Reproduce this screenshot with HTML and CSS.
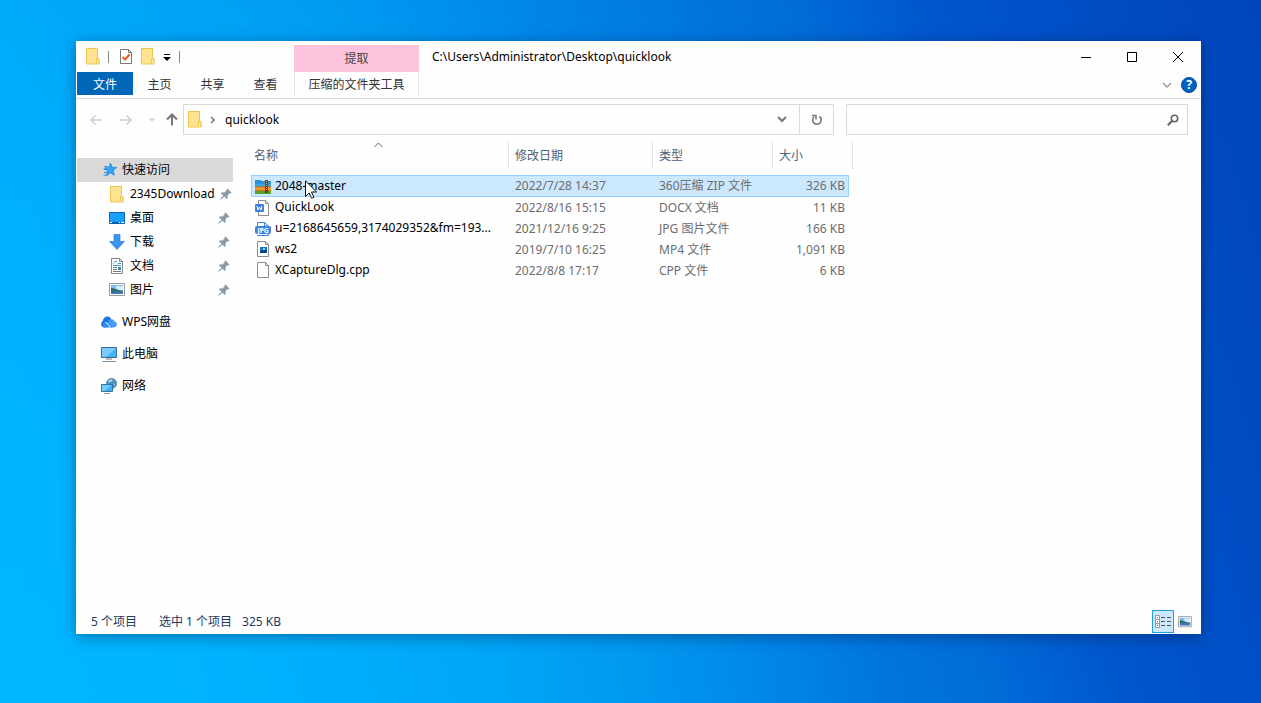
FILE: index.html
```
<!DOCTYPE html>
<html lang="zh-CN">
<head>
  <meta charset="UTF-8">
  <meta name="viewport" content="width=device-width, initial-scale=1.0">
  <title>quicklook</title>
  <link rel="stylesheet" href="styles.css">
</head>
<body>

  <!-- shared icons -->
  <svg class="sprite" aria-hidden="true">
    <symbol id="folder" viewBox="0 0 14 17">
      <path d="M.5.5h11v10.500h1.500v5H.5z" fill="#ffe391" stroke="#ecc54f"/>
      <path d="M10.500 15.500v-5h2.500v5.500" fill="#ffe9a8" stroke="#ecc54f"/>
    </symbol>
    <symbol id="pin" viewBox="0 0 12 12">
      <path d="M7.500.5l4 4-1 1-1-.2-2 2.200.2 2.500-1 1-2.400-2.500L1 11.800l-.8-.8 3.200-3.300L1 5.300l1-1 2.400.2 2.100-2-.1-1z" fill="#8a9aa6"/>
    </symbol>
    <symbol id="picture" viewBox="0 0 16 14">
      <path d="M.5.5h15v12H.5z" fill="#fff" stroke="#999"/>
      <path d="M2 2h12v9H2z" fill="#7fb9ee"/>
      <path d="M6 3h8v4H9z" fill="#d8ecfc"/>
      <path d="M2 5c3 0 5 2 12 3v1H2z" fill="#356b62"/>
      <path d="M2 8.500h12V11H2z" fill="#3f78b8"/>
    </symbol>
    <symbol id="page" viewBox="0 0 14 17">
      <path d="M1.500.5h8l3 3v12h-11z" fill="#fff" stroke="#8c8c8c"/>
      <path d="M9.500.5v3h3" fill="none" stroke="#8c8c8c"/>
    </symbol>
  </svg>

  <main class="window">
    <header class="titlebar">
      <div class="quick-access">
        <svg class="folder" width="14" height="17"><use href="#folder"/></svg>
        <span class="divider"></span>
        <button aria-label="属性"><svg width="14" height="17" viewBox="0 0 14 17"><path d="M1.500 1.500h8l3 3v11h-11z" fill="#fff" stroke="#777"/><path d="M9.500 1.500v3h3" fill="none" stroke="#777"/><path d="M3.500 9l2.500 2.500 4.500-5" fill="none" stroke="#e06020" stroke-width="2"/></svg></button>
        <button aria-label="新建文件夹"><svg width="14" height="17"><use href="#folder"/></svg></button>
        <button aria-label="自定义快速访问工具栏"><svg width="8" height="8" viewBox="0 0 8 8"><path d="M1 1.500h6" stroke="#000"/><path d="M0 4h8L4 8z"/></svg></button>
        <span class="divider"></span>
      </div>
      <div class="context-title">提取</div>
      <h1>C:\Users\Administrator\Desktop\quicklook</h1>
      <div class="controls">
        <button aria-label="最小化"><svg width="12" height="12" viewBox="0 0 12 12"><path d="M1 6.500h10" stroke="#000"/></svg></button>
        <button aria-label="最大化"><svg width="12" height="12" viewBox="0 0 12 12"><path d="M1.500 1.500h9v9h-9z" fill="none" stroke="#000"/></svg></button>
        <button aria-label="关闭"><svg width="12" height="12" viewBox="0 0 12 12"><path d="M1 1l10 10M11 1L1 11" stroke="#000"/></svg></button>
      </div>
    </header>

    <nav class="tabs">
      <button class="tab file">文件</button>
      <button class="tab">主页</button>
      <button class="tab">共享</button>
      <button class="tab">查看</button>
      <button class="tab context">压缩的文件夹工具</button>
      <div class="tabs-right">
        <button aria-label="展开功能区"><svg width="10" height="6" viewBox="0 0 10 6"><path d="M1 1l4 4 4-4" fill="none" stroke="#999" stroke-width="1.300"/></svg></button>
        <button class="help" aria-label="帮助">?</button>
      </div>
    </nav>

    <div class="toolbar">
      <div class="history">
        <button aria-label="后退"><svg width="14" height="12" viewBox="0 0 14 12"><path d="M13 6H2M6.500 1.500L2 6l4.500 4.500" fill="none" stroke="#ccc" stroke-width="1.500"/></svg></button>
        <button aria-label="前进"><svg width="14" height="12" viewBox="0 0 14 12"><path d="M1 6h11M7.500 1.500L12 6l-4.500 4.500" fill="none" stroke="#ccc" stroke-width="1.500"/></svg></button>
        <button class="recent" aria-label="最近浏览的位置"><svg width="6" height="5" viewBox="0 0 6 5"><path d="M.5 1L3 3.500 5.500 1" fill="none" stroke="#ccc" stroke-width="1.300"/></svg></button>
        <button class="up" aria-label="上移"><svg width="12" height="13" viewBox="0 0 12 13"><path d="M6 12.500V2M1 6.500l5-5 5 5" fill="none" stroke="#777" stroke-width="2"/></svg></button>
      </div>
      <div class="address">
        <svg width="14" height="17"><use href="#folder"/></svg>
        <svg class="crumb" width="6" height="8" viewBox="0 0 6 8"><path d="M1 1l3 3-3 3" fill="none" stroke="#777" stroke-width="1.600"/></svg>
        <a href="#">quicklook</a>
        <button class="drop" aria-label="以前的位置"><svg width="10" height="7" viewBox="0 0 10 7"><path d="M1 1l4 4 4-4" fill="none" stroke="#777" stroke-width="2"/></svg></button>
        <button class="refresh" aria-label="刷新"><svg width="12" height="12" viewBox="0 0 12 12"><path d="M8.500 2.500A4.300 4.300 0 1 1 3 2.800" fill="none" stroke="#777" stroke-width="1.600"/><path d="M1 1.500h4v4" fill="none" stroke="#777" stroke-width="1.500"/></svg></button>
      </div>
      <div class="search">
        <input type="search" aria-label="搜索">
        <svg width="12" height="12" viewBox="0 0 12 12"><circle cx="7.500" cy="4.500" r="3.200" fill="none" stroke="#666" stroke-width="1.600"/><path d="M5 7L.8 11.200" stroke="#666" stroke-width="2"/></svg>
      </div>
    </div>

    <div class="content">
      <aside class="sidebar">
        <a class="item active" href="#"><svg width="16" height="14" viewBox="0 0 16 14"><path d="M9.500 0l1.700 4.300 4.300.2-3.300 3 1.100 4.700-3.800-2.400L5.600 13l1-4.900-3.100-3 4.300-.7z" fill="#2ea3f7" stroke="#1681d8" stroke-width=".7"/><path d="M3.500 3.500h3M2.500 6.500h4M3 9.500h3M2.500 12h3" stroke="#2c8ad8"/></svg>快速访问</a>
        <a class="item sub" href="#"><svg class="folder" width="16" height="17"><use href="#folder"/></svg>2345Download<svg class="pin" width="12" height="12"><use href="#pin"/></svg></a>
        <a class="item sub" href="#"><svg width="16" height="12" viewBox="0 0 16 12"><path d="M.5.5h15v11H.5z" fill="#1aa0fa" stroke="#0964b4"/><path d="M1 10.500h14" stroke="#075dac"/><path d="M1 10.500h2M10 10.500h1M12 10.500h3" stroke="#fff"/></svg>桌面<svg class="pin" width="12" height="12"><use href="#pin"/></svg></a>
        <a class="item sub" href="#"><svg width="16" height="16" viewBox="0 0 16 16"><path d="M5 .5h6v7h4.500L8 15.500.5 7.500H5z" fill="#3a94ee" stroke="#2b7cd0" stroke-width=".7"/></svg>下载<svg class="pin" width="12" height="12"><use href="#pin"/></svg></a>
        <a class="item sub" href="#"><svg width="16" height="16" viewBox="0 0 16 16"><path d="M2.500.5h8l3 3v12h-11z" fill="#fff" stroke="#888"/><path d="M10.500.5v3h3" fill="none" stroke="#888"/><path d="M4 5.500l2-2h2M9 5.500h3M4 7.500h8" fill="none" stroke="#3993c8"/><path d="M4 9.500h4M4 11.500h4M4 13.500h8" stroke="#777"/><path d="M9 9h3v3H9z" fill="#4282a8"/></svg>文档<svg class="pin" width="12" height="12"><use href="#pin"/></svg></a>
        <a class="item sub" href="#"><svg width="16" height="14"><use href="#picture"/></svg>图片<svg class="pin" width="12" height="12"><use href="#pin"/></svg></a>
        <a class="item root" href="#"><svg width="16" height="12" viewBox="0 0 16 12"><path d="M2 5C2 0 9-1 10 3l1 3-6 5.500H3C-1 11-.5 6 2 5z" fill="#1878ea"/><path d="M7 6c2-4 6-3 6.500-.5 3 .5 3.500 5-.5 6H9.500L5 7z" fill="#459bfa"/><path d="M3 6.500c2-1 4 0 5.500 1.500l3 3.500H4c-3 0-3.500-3.500-1-5z" fill="#2f8af5"/><path d="M4.500 6.500c2 .5 3 2.500 5 5" fill="none" stroke="#fff"/></svg>WPS网盘</a>
        <a class="item root" href="#"><svg width="16" height="15" viewBox="0 0 16 15"><path d="M.5.5h15v10H.5z" fill="#42b3fa" stroke="#356f96"/><path d="M1 1h14L5 10H1z" fill="#7bcbff"/><path d="M5 12h6" stroke="#777"/><path d="M1 14.500h14" stroke="#7a96a8"/></svg>此电脑</a>
        <a class="item root" href="#"><svg width="16" height="16" viewBox="0 0 16 16"><circle cx="10.500" cy="5.500" r="5" fill="#4d93bf" stroke="#4d86aa"/><path d="M7 2.500l3-1.500 2 1-1.500 2-3 .5z" fill="#a5cddf"/><path d="M12.500 6l2-.5-1 3z" fill="#8fbdd6"/><path d="M.5 6.500h11v7H.5z" fill="#3eb0f7" stroke="#31759f"/><path d="M1 7h9l-6 6H1z" fill="#70caff"/><path d="M3 15.500h6" stroke="#7a96a8"/></svg>网络</a>
      </aside>

      <section class="files">
        <table>
          <thead>
            <tr>
              <th class="name">名称<svg class="sort" width="9" height="6" viewBox="0 0 9 6"><path d="M.5 5l4-4 4 4" fill="none" stroke="#666"/></svg></th>
              <th class="date">修改日期</th>
              <th class="type">类型</th>
              <th class="size">大小</th>
            </tr>
          </thead>
          <tbody>
            <tr class="selected">
              <td class="name"><svg width="16" height="15" viewBox="0 0 16 15"><path d="M0 2V1h6l1 1h9v4H0z" fill="#2e92d8"/><path d="M0 5h16v4H0z" fill="#3ba6de"/><path d="M0 8h16v3H0z" fill="#ef9b26"/><path d="M0 11h16v4H0z" fill="#57a33a"/><path d="M0 8h16M0 11.500h16" stroke="#c96f1d"/><path d="M10 1h3v13h-3z" fill="#7b3c16"/><path d="M11.500 2v9" stroke="#e8b768" stroke-dasharray="1 1"/></svg>2048-master<svg class="cursor" width="12" height="19" viewBox="0 0 12 19"><path d="M.5.8v15.700l3.700-3.500 2.400 5.300 2.300-1L6.500 12h5z" fill="#fff" stroke="#111"/></svg></td>
              <td>2022/7/28 14:37</td>
              <td>360压缩 ZIP 文件</td>
              <td class="size">326 KB</td>
            </tr>
            <tr>
              <td class="name"><svg width="16" height="16" viewBox="0 0 16 16"><path d="M3.500.5h7l3 3v12h-10z" fill="#fff" stroke="#8c8c8c"/><path d="M10.500.5v3h3" fill="none" stroke="#8c8c8c"/><rect y="4" width="9" height="8" rx="1" fill="#3d7fe0"/><path d="M2 6l1 4 1.500-3L6 10l1-4" fill="none" stroke="#fff"/></svg>QuickLook</td>
              <td>2022/8/16 15:15</td>
              <td>DOCX 文档</td>
              <td class="size">11 KB</td>
            </tr>
            <tr>
              <td class="name"><svg width="16" height="16" viewBox="0 0 16 16"><path d="M2.500 5V1.500h7L13.500 5v9.500h-11z" fill="#fff" stroke="#3d82df"/><path d="M9.500 1.500V5h4" fill="none" stroke="#3d82df"/><rect y="5" width="16" height="8" rx="2" fill="#3d82df"/><text class="jpg" x="8" y="12">JPG</text></svg>u=2168645659,3174029352&amp;fm=193...</td>
              <td>2021/12/16 9:25</td>
              <td>JPG 图片文件</td>
              <td class="size">166 KB</td>
            </tr>
            <tr>
              <td class="name"><svg width="16" height="17" viewBox="-1 0 16 17"><use href="#page" width="14" height="17"/><path d="M4 6h7v6H4z" fill="#1677c5"/><path d="M4 10l2-1 2 1 1-2 2 2v2H4z" fill="#0b437b"/><path d="M7 7h2v2H7z" fill="#8ed0ff"/></svg>ws2</td>
              <td>2019/7/10 16:25</td>
              <td>MP4 文件</td>
              <td class="size">1,091 KB</td>
            </tr>
            <tr>
              <td class="name"><svg width="16" height="17" viewBox="-1 0 16 17"><use href="#page" width="14" height="17"/></svg>XCaptureDlg.cpp</td>
              <td>2022/8/8 17:17</td>
              <td>CPP 文件</td>
              <td class="size">6 KB</td>
            </tr>
          </tbody>
        </table>
      </section>
    </div>

    <footer class="status">
      <span class="count">5 个项目</span>
      <span class="chosen">选中 1 个项目</span>
      <span>325 KB</span>
      <div class="views">
        <button class="on" aria-label="详细信息"><svg width="16" height="14" viewBox="0 0 16 14"><path d="M.5.5h4v4h-4zM.5 4.500h4v4h-4zM.5 8.500h4v4h-4z" fill="#fff" stroke="#999"/><path d="M6 2.500h4M12 2.500h4M6 6.500h4M12 6.500h4M6 10.500h4M12 10.500h4" stroke="#555"/><path d="M2 2h1v1H2z" fill="#555"/><path d="M2 6h1v1H2z" fill="#28f"/><path d="M2 10h1v1H2z" fill="#b22"/></svg></button>
        <button aria-label="大缩略图"><svg width="14" height="12"><use href="#picture"/></svg></button>
      </div>
    </footer>
  </main>

</body>
</html>
```
FILE: styles.css
```
* {
  box-sizing: border-box;
}

body {
  margin: 0;
  min-height: 100vh;
  padding: 41px 60px 69px 76px;
  display: flex;
  font-family: "Noto Sans", "Noto Sans CJK SC", sans-serif;
  font-size: 12px;
  line-height: 16px;
  color: #000;
  background:
    radial-gradient(circle at 0 100%, rgba(0,184,255,0.9), rgba(0,184,255,0) 60%),
    linear-gradient(74deg, #00b2ff 0%, #00a4f8 18%, #009af2 34%, #008eec 44%, #007ee4 55%, #006cd8 68%, #0056cc 77%, #0044bc 100%);
}

button {
  border: none;
  background: none;
  padding: 0;
  font: inherit;
  color: inherit;
  display: flex;
  align-items: center;
  justify-content: center;
}

a {
  color: inherit;
  text-decoration: none;
}

svg {
  flex: none;
  display: block;
}

.sprite {
  position: absolute;
  width: 0;
  height: 0;
}

.window {
  flex: 1;
  min-width: 0;
  display: flex;
  flex-direction: column;
  background: #fefefe;
  box-shadow: 0 3px 14px rgba(0,20,60,0.4);
}

/* title bar */
.titlebar {
  height: 31px;
  display: flex;
}

.quick-access {
  width: 218px;
  padding-left: 10px;
  display: flex;
  align-items: center;
  gap: 8px;
}

.divider {
  width: 1px;
  height: 12px;
  margin-right: 2px;
  background: #888;
}

.context-title {
  width: 125px;
  margin-top: 4px;
  background: #ffc4dd;
  color: #444;
  display: flex;
  align-items: center;
  justify-content: center;
}

h1 {
  flex: 1;
  margin: 0;
  padding-left: 13px;
  font-size: 12px;
  font-weight: normal;
  line-height: 31px;
}

.controls {
  display: flex;
}

.controls button {
  width: 46px;
}

/* ribbon tabs */
.tabs {
  height: 27px;
  padding-left: 1px;
  display: flex;
  align-items: flex-start;
  border-bottom: 1px solid #dadada;
}

.tab {
  width: 53px;
  height: 23px;
  padding-top: 2px;
  color: #333;
}

.tab.file {
  width: 56px;
  background: #0067b8;
  color: #fff;
}

.tab.context {
  width: 125px;
  margin-left: 2px;
  border: 1px solid #e2e2e2;
  border-width: 0 1px;
}

.tabs-right {
  height: 26px;
  margin-left: auto;
  padding-right: 4px;
  display: flex;
  align-items: center;
  gap: 9px;
}

.help {
  width: 16px;
  height: 16px;
  border-radius: 50%;
  background: #0063c2;
  border: 1px solid #064a94;
  color: #fff;
  font-weight: bold;
}

/* address row */
.toolbar {
  padding: 5px 13px 6px;
  display: flex;
}

.history {
  width: 94px;
  display: flex;
  align-items: center;
}

.history button {
  width: 14px;
  margin-right: 16px;
}

.history .recent {
  width: 6px;
  margin-right: 11px;
}

.history .up {
  width: 12px;
  margin-right: 0;
}

.address {
  flex: 1;
  height: 31px;
  padding-left: 4px;
  border: 1px solid #d9d9d9;
  display: flex;
  align-items: center;
}

.crumb {
  margin: 0 9px 0 8px;
}

.drop {
  margin-left: auto;
  width: 34px;
  height: 29px;
}

.refresh {
  width: 34px;
  height: 29px;
  border-left: 1px solid #d9d9d9;
}

.search {
  flex: 0 1 342px;
  margin-left: 12px;
  padding-right: 8px;
  border: 1px solid #d9d9d9;
  display: flex;
  align-items: center;
}

.search input {
  flex: 1;
  min-width: 0;
  border: none;
  outline: none;
  background: none;
  font: inherit;
}

/* content */
.content {
  flex: 1;
  display: flex;
}

.sidebar {
  width: 157px;
  padding: 17px 0 0 1px;
}

.item {
  height: 24px;
  padding: 0 3px 0 24px;
  display: flex;
  align-items: center;
  gap: 5px;
  white-space: nowrap;
}

.item.active {
  background: #d9d9d9;
}

.item.sub {
  padding-left: 32px;
}

.item.root {
  margin-top: 8px;
}

.pin {
  margin-left: auto;
}

.files {
  padding-left: 18px;
}

table {
  width: 598px;
  table-layout: fixed;
  border-collapse: separate;
  border-spacing: 0;
}

th {
  position: relative;
  height: 28px;
  padding: 2px 0 0 6px;
  color: #4c607a;
  font-weight: normal;
  text-align: left;
  border-left: 1px solid #e5e5e5;
}

th.name {
  width: 257px;
  padding-left: 3px;
  border-left: none;
}

th.date {
  width: 144px;
}

th.type {
  width: 120px;
}

th.size::after {
  content: "";
  position: absolute;
  top: 0;
  right: -4px;
  height: 100%;
  border-right: 1px solid #e5e5e5;
}

.sort {
  position: absolute;
  top: 1px;
  left: 123px;
}

thead::after {
  content: "";
  display: block;
  height: 6px;
}

td {
  height: 21px;
  padding: 0 0 0 7px;
  color: #6d6d6d;
  white-space: nowrap;
}

td.name {
  position: relative;
  padding-left: 4px;
  color: #000;
}

td.name svg {
  display: inline-block;
  vertical-align: middle;
  margin-right: 4px;
}

td.size {
  padding-right: 4px;
  text-align: right;
}

.selected td {
  height: 22px;
  background: #cce8ff;
  border: 1px solid #99d1ff;
  border-width: 1px 0;
}

.selected td:first-child {
  border-left-width: 1px;
  padding-left: 3px;
}

.selected td:last-child {
  border-right-width: 1px;
  padding-right: 3px;
}

td.name .cursor {
  position: absolute;
  top: 4px;
  left: 53px;
  margin: 0;
}

.jpg {
  font-size: 7px;
  font-weight: bold;
  text-anchor: middle;
  fill: #fff;
}

/* status bar */
.status {
  height: 25px;
  padding: 0 9px 0 15px;
  display: flex;
  align-items: center;
  color: #1e395b;
}

.count {
  margin-right: 22px;
}

.chosen {
  margin-right: 10px;
}

.views {
  margin-left: auto;
  display: flex;
  gap: 4px;
}

.views .on {
  width: 22px;
  height: 23px;
  background: #cce8ff;
  border: 1px solid #26a0da;
}
```
